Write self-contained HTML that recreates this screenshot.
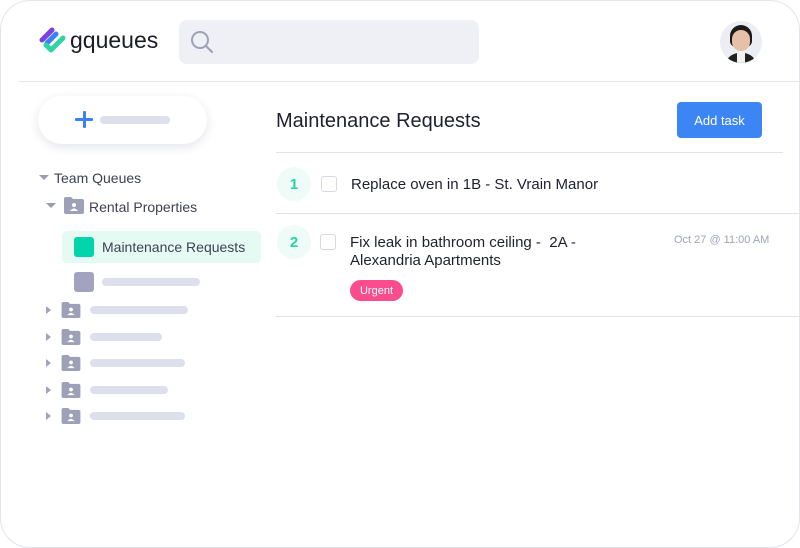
<!DOCTYPE html>
<html><head><style>
*{margin:0;padding:0;box-sizing:border-box}
body{width:800px;height:548px;background:#fff;font-family:"Liberation Sans",sans-serif;position:relative;overflow:hidden}
.card{position:absolute;left:0;top:0;width:800px;height:548px;border:1px solid #e3e5ee;border-radius:30px;background:#fff}
.a{position:absolute}
.bar{position:absolute;height:8px;border-radius:4px;background:#dde0ec}
.tri{position:absolute;width:0;height:0}
.t{color:#3f4053;font-size:14px}
</style></head><body>
<div class="card"></div>
<!-- logo -->
<svg class="a" style="left:38px;top:26px" width="30" height="30" viewBox="0 0 30 30">
<path d="M4 14 L14 4" stroke="#7b3fe4" stroke-width="5" stroke-linecap="round"/>
<path d="M9 17 L18 8" stroke="#3c82f6" stroke-width="5" stroke-linecap="round"/>
<path d="M8 19 L13 24 L25 12" stroke="#2fd3a5" stroke-width="5" stroke-linecap="round" stroke-linejoin="round" fill="none"/>
</svg>
<div class="a" style="left:70px;top:27px;font-size:23px;color:#1b1c28;letter-spacing:0">gqueues</div>
<div class="a" style="left:179px;top:20px;width:300px;height:44px;background:#eff0f5;border-radius:8px"></div>
<svg class="a" style="left:190px;top:30px" width="24" height="24" viewBox="0 0 24 24"><circle cx="10" cy="10" r="8" stroke="#9ea1b8" stroke-width="2" fill="none"/><path d="M16 16 L22 22" stroke="#9ea1b8" stroke-width="2.2" stroke-linecap="round"/></svg>
<!-- avatar -->
<div class="a" style="left:720px;top:21px;width:42px;height:42px;border-radius:50%;background:#eceef3;overflow:hidden">
<div class="a" style="left:10px;top:4px;width:22px;height:22px;border-radius:11px 11px 6px 6px;background:#1e1a1a"></div>
<div class="a" style="left:12px;top:9px;width:18px;height:21px;border-radius:9px;background:#e6c0a8"></div>
<div class="a" style="left:5px;top:32px;width:32px;height:14px;border-radius:14px 14px 0 0;background:#222"></div>
<div class="a" style="left:17px;top:30px;width:8px;height:12px;background:#f2f2f2"></div>
</div>
<div class="a" style="left:18px;top:81px;width:782px;height:1px;background:#e4e6ef"></div>
<!-- new button -->
<div class="a" style="left:38px;top:96px;width:169px;height:48px;border-radius:24px;background:#fff;box-shadow:0 3px 10px rgba(30,40,90,0.12)"></div>
<div class="a" style="left:75px;top:118px;width:18px;height:3px;background:#3c82f6;border-radius:1px"></div>
<div class="a" style="left:82.5px;top:111px;width:3px;height:17px;background:#3c82f6;border-radius:1px"></div>
<div class="bar" style="left:100px;top:116px;width:70px"></div>
<!-- tree -->
<div class="tri" style="left:39px;top:175px;border-left:5px solid transparent;border-right:5px solid transparent;border-top:5px solid #9a9cb3"></div>
<div class="a t" style="left:54px;top:170px">Team Queues</div>
<div class="tri" style="left:46px;top:203px;border-left:5px solid transparent;border-right:5px solid transparent;border-top:5px solid #9a9cb3"></div>
<svg class="a" style="left:64px;top:197px" width="20" height="17" viewBox="0 0 20 17"><path d="M0 2 Q0 0 2 0 H7 L9 2 H18 Q20 2 20 4 V15 Q20 17 18 17 H2 Q0 17 0 15Z" fill="#9ea0b8"/><circle cx="10" cy="8" r="2" fill="#fff"/><path d="M6 14 Q10 9 14 14Z" fill="#fff"/></svg>
<div class="a t" style="left:89px;top:199px">Rental Properties</div>
<div class="a" style="left:62px;top:231px;width:199px;height:32px;background:#e6faf4;border-radius:5px"></div>
<div class="a" style="left:74px;top:237px;width:20px;height:20px;border-radius:3px;background:#00d4a8"></div>
<div class="a t" style="left:102px;top:239px">Maintenance Requests</div>
<div class="a" style="left:74px;top:272px;width:20px;height:20px;border-radius:3px;background:#a2a3be"></div>
<div class="bar" style="left:102px;top:278px;width:98px"></div>
<div id="rows"></div>
<script>
var w=[98,72,95,78,95],h='';
for(var i=0;i<5;i++){var y=310+i*26.5;
h+='<div class="tri" style="left:46px;top:'+(y-4)+'px;border-top:4px solid transparent;border-bottom:4px solid transparent;border-left:5px solid #a2a3be"></div>';
h+='<svg class="a" style="left:61px;top:'+(y-8)+'px" width="20" height="16" viewBox="0 0 20 17"><path d="M0 2 Q0 0 2 0 H7 L9 2 H18 Q20 2 20 4 V15 Q20 17 18 17 H2 Q0 17 0 15Z" fill="#9ea0b8"/><circle cx="10" cy="8" r="2" fill="#fff"/><path d="M6 14 Q10 9 14 14Z" fill="#fff"/></svg>';
h+='<div class="bar" style="left:90px;top:'+(y-4)+'px;width:'+w[i]+'px"></div>';}
document.getElementById('rows').innerHTML=h;
</script>
<!-- main -->
<div class="a" style="left:276px;top:110px;font-size:20px;color:#1f2030">Maintenance Requests</div>
<div class="a" style="left:677px;top:102px;width:85px;height:36px;background:#3c85f4;border-radius:4px;color:#fff;font-size:13px;text-align:center;line-height:38px">Add task</div>
<div class="a" style="left:276px;top:152px;width:507px;height:1px;background:#e0e3ee"></div>
<div class="a" style="left:277px;top:167px;width:34px;height:34px;border-radius:50%;background:#eefbf6;color:#22d4a3;font-size:15px;font-weight:bold;text-align:center;line-height:36px">1</div>
<div class="a" style="left:321px;top:176px;width:16px;height:16px;border:1px solid #d6d8e4;border-radius:3px"></div>
<div class="a" style="left:351px;top:176px;font-size:15px;color:#1f2030">Replace oven in 1B - St. Vrain Manor</div>
<div class="a" style="left:276px;top:213px;width:524px;height:1px;background:#e0e3ee"></div>
<div class="a" style="left:277px;top:225px;width:34px;height:34px;border-radius:50%;background:#eefbf6;color:#22d4a3;font-size:15px;font-weight:bold;text-align:center;line-height:36px">2</div>
<div class="a" style="left:320px;top:234px;width:16px;height:16px;border:1px solid #d6d8e4;border-radius:3px"></div>
<div class="a" style="left:350px;top:234px;font-size:15px;color:#1f2030;line-height:18px">Fix leak in bathroom ceiling -&nbsp; 2A -<br>Alexandria Apartments</div>
<div class="a" style="left:674px;top:234px;font-size:11px;color:#a0a3ba">Oct 27 @ 11:00 AM</div>
<div class="a" style="left:350px;top:280px;width:53px;height:21px;border-radius:11px;background:#fa4d8e;color:#fff;font-size:11px;text-align:center;line-height:22px">Urgent</div>
<div class="a" style="left:276px;top:316px;width:524px;height:1px;background:#e0e3ee"></div>
</body></html>
